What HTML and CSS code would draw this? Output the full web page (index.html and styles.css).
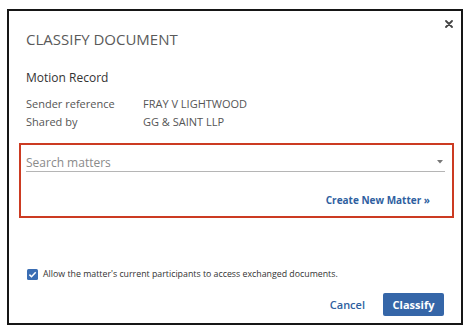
FILE: index.html
```html
<!DOCTYPE html>
<html>
<head>
<meta charset="utf-8">
<link rel="stylesheet" href="styles.css">
</head>
<body>
<div class="dialog">
  <button class="close" aria-label="Close">
    <svg width="8" height="8" viewBox="0 0 8 8"><path d="M1 1L7 7M7 1L1 7" stroke="#444" stroke-width="1.8" stroke-linecap="round"/></svg>
  </button>
  <h1 class="title">CLASSIFY DOCUMENT</h1>
  <div class="doc-name">Motion Record</div>
  <div class="meta">
    <div class="meta-row"><span class="meta-label">Sender reference</span><span class="meta-value">FRAY V LIGHTWOOD</span></div>
    <div class="meta-row"><span class="meta-label">Shared by</span><span class="meta-value">GG &amp; SAINT LLP</span></div>
  </div>
  <div class="highlight">
    <div class="search">
      <span class="search-placeholder">Search matters</span>
      <svg class="caret" width="6" height="4" viewBox="0 0 6 4"><path d="M0 0H6L3 3.5Z" fill="#777"/></svg>
    </div>
    <div class="create-row"><a class="create-link">Create New Matter »</a></div>
  </div>
  <label class="check-row">
    <span class="checkbox"><svg width="11" height="11" viewBox="0 0 11 11"><rect width="11" height="11" rx="1.5" fill="#3a6db3"/><path d="M2.4 5.6L4.5 7.7L8.7 3.3" stroke="#fff" stroke-width="1.5" fill="none"/></svg></span>
    <span class="check-text">Allow the matter's current participants to access exchanged documents.</span>
  </label>
  <div class="actions">
    <a class="btn-cancel">Cancel</a>
    <button class="btn-primary">Classify</button>
  </div>
</div>
</body>
</html>
```
FILE: styles.css
```css
html, body {
  margin: 0;
  padding: 0;
  background: #fff;
}
body {
  font-family: "Open Sans", "Noto Sans", sans-serif;
  color: #444;
}
.dialog {
  position: relative;
  box-sizing: border-box;
  width: 456px;
  height: 316px;
  margin: 9px 0 0 7px;
  border: 2px solid #161616;
  padding: 0 16px 0 17px;
  display: flex;
  flex-direction: column;
}
.close {
  position: absolute;
  top: 9px;
  right: 8px;
  padding: 0;
  border: 0;
  background: none;
  width: 8px;
  height: 8px;
  display: block;
}
.close svg { display: block; }
.title {
  margin: 16px 0 0;
  font-size: 15px;
  line-height: 24px;
  font-weight: 400;
  color: #5a5a5a;
  letter-spacing: 0;
}
.doc-name {
  margin-top: 18px;
  font-size: 12px;
  line-height: 18px;
  color: #333;
}
.meta {
  margin-top: 8px;
  display: flex;
  flex-direction: column;
}
.meta-row {
  display: flex;
  font-size: 11px;
  line-height: 18px;
  color: #555;
}
.meta-label {
  width: 117px;
}
.highlight {
  margin: 12px -9px 0 -7px;
  border: 2px solid #cc3b22;
  padding: 0 7px 0 5px;
  height: 71px;
}
.search {
  margin-top: 9px;
  height: 17px;
  border-bottom: 1px solid #b5b5b5;
  display: flex;
  align-items: center;
  justify-content: space-between;
  padding-right: 2px;
}
.search-placeholder {
  font-size: 12px;
  line-height: 17px;
  color: #8a8a8a;
}
.caret { margin-top: -2px; }
.create-row {
  display: flex;
  justify-content: flex-end;
  padding-right: 15px;
  margin-top: 21px;
}
.create-link {
  font-size: 10px;
  line-height: 14px;
  font-weight: 700;
  color: #2f5f9f;
}
.check-row {
  margin-top: 50px;
  display: flex;
  align-items: center;
  gap: 5px;
  padding-left: 1px;
}
.checkbox { display: block; width: 11px; height: 11px; }
.checkbox svg { display: block; }
.check-text {
  font-size: 8.8px;
  line-height: 12px;
  color: #333;
}
.actions {
  margin-top: 13px;
  display: flex;
  justify-content: flex-end;
  align-items: center;
  gap: 18px;
  padding-right: 1px;
}
.btn-cancel {
  font-size: 11px;
  font-weight: 600;
  color: #2f5f9f;
}
.btn-primary {
  width: 61px;
  height: 23px;
  border: 0;
  border-radius: 2px;
  background: #3566a8;
  color: #fff;
  font-family: inherit;
  font-size: 11px;
  font-weight: 700;
  padding: 0;
}
```
